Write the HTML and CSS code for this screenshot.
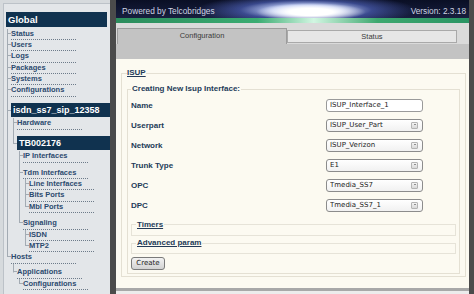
FILE: index.html
```html
<!DOCTYPE html>
<html lang="en">
<head>
    <meta charset="UTF-8">
    <meta name="viewport" content="width=device-width, initial-scale=1.0">
    <title>Toolpack Web Portal</title>
    <link rel="stylesheet" href="styles.css">
</head>
<body>
    <div class="sidebar">
        <div class="node-title global">Global</div>
        <ul class="tree top">
            <li><a href="#">Status</a></li>
            <li><a href="#">Users</a></li>
            <li><a href="#">Logs</a></li>
            <li><a href="#">Packages</a></li>
            <li><a href="#">Systems</a></li>
            <li><a href="#">Configurations</a></li>
            <li class="group">
                <div class="node-title">isdn_ss7_sip_12358</div>
                <ul class="tree first">
                    <li><a href="#">Hardware</a></li>
                    <li class="group">
                        <div class="node-title">TB002176</div>
                        <ul class="tree first">
                            <li><a href="#">IP Interfaces</a></li>
                            <li class="branch"><a href="#">Tdm Interfaces</a>
                                <ul class="tree">
                                    <li><a href="#">Line Interfaces</a></li>
                                    <li><a href="#">Bits Ports</a></li>
                                    <li><a href="#">Mbl Ports</a></li>
                                </ul>
                            </li>
                            <li class="branch"><a href="#">Signaling</a>
                                <ul class="tree">
                                    <li><a href="#">ISDN</a></li>
                                    <li><a href="#">MTP2</a></li>
                                </ul>
                            </li>
                        </ul>
                    </li>
                </ul>
            </li>
            <li><a href="#">Hosts</a>
                <ul class="tree">
                    <li class="apps"><a href="#">Applications</a>
                        <ul class="tree">
                            <li><a href="#">Configurations</a></li>
                        </ul>
                    </li>
                </ul>
            </li>
        </ul>
    </div>

    <div class="main">
        <div class="banner">
            <span>Powered by Telcobridges</span>
            <span>Version: 2.3.18</span>
        </div>
        <div class="tabs">
            <div class="tab active">Configuration</div>
            <div class="tab">Status</div>
        </div>
        <div class="tab-band"></div>

        <div class="content">
            <fieldset class="outer">
                <legend><a href="#">ISUP</a></legend>
                <fieldset class="inner">
                    <legend>Creating New Isup Interface:</legend>
                    <form class="rows" id="isupForm">
                        <label for="name">Name</label>
                        <input type="text" id="name" value="ISUP_Interface_1">

                        <label for="userpart">Userpart</label>
                        <span class="select"><select id="userpart"><option>ISUP_User_Part</option></select><span class="arrow"></span></span>

                        <label for="network">Network</label>
                        <span class="select"><select id="network"><option>ISUP_Verizon</option></select><span class="arrow"></span></span>

                        <label for="trunk">Trunk Type</label>
                        <span class="select"><select id="trunk"><option>E1</option><option>T1</option></select><span class="arrow"></span></span>

                        <label for="opc">OPC</label>
                        <span class="select"><select id="opc"><option>Tmedia_SS7</option></select><span class="arrow"></span></span>

                        <label for="dpc">DPC</label>
                        <span class="select"><select id="dpc"><option>Tmedia_SS7_1</option></select><span class="arrow"></span></span>
                    </form>
                    <fieldset class="folded"><legend><a href="#">Timers</a></legend></fieldset>
                    <fieldset class="folded"><legend><a href="#">Advanced param</a></legend></fieldset>
                    <button type="submit" form="isupForm" class="create">Create</button>
                </fieldset>
            </fieldset>
        </div>
        <div class="footer"></div>
    </div>
</body>
</html>
```

FILE: styles.css
```css
* {
    box-sizing: border-box;
}
body {
    margin: 0;
    height: 100vh;
    overflow: hidden;
    display: flex;
    gap: 6px;
    background: #4b4b4b;
    font-family: 'Liberation Sans', Arial, sans-serif;
}

/* left tree */
.sidebar {
    flex: none;
    width: 110px;
    padding: 12px 0 0 6px;
    background: #e3e6e9;
    box-shadow: inset 3px 3px 0 #d6dadd, inset 4px 4px 0 #bcc2c8;
}
.node-title {
    height: 14px;
    line-height: 14px;
    padding-left: 2px;
    background: #10324f;
    color: #fff;
    font-size: 9px;
    font-weight: bold;
    white-space: nowrap;
    overflow: hidden;
}
.node-title.global {
    height: 15px;
    line-height: 15px;
    margin-right: 3px;
    font-size: 9.5px;
}
.tree {
    list-style: none;
    margin: 0 0 0 2px;
    padding: 0;
}
.tree.top {
    margin-left: 1px;
    padding-top: 1.5px;
}
.tree.first {
    padding-top: 1.5px;
}
.tree li {
    --dash: 4px;
    padding-left: 4px;
    background:
        linear-gradient(#a3abb3, #a3abb3) 0 0 / 1px 100% no-repeat,
        linear-gradient(#a3abb3, #a3abb3) 0 var(--dash) / 4px 1px no-repeat;
}
.tree li:last-child {
    background-size: 1px calc(var(--dash) + 1px), 4px 1px;
}
.tree li.group {
    --dash: 13px;
    padding-top: 6px;
}
.tree li.branch {
    --dash: 9px;
    padding-top: 5px;
}
.tree li.apps {
    --dash: 7.5px;
    padding-top: 3.5px;
}
.tree a {
    display: block;
    width: 65px;
    line-height: 9px;
    padding-bottom: 1.4px;
    border-bottom: 1px dotted #6d7b8a;
    color: #2b4a6e;
    font-size: 7.5px;
    font-weight: bold;
    text-decoration: none;
    white-space: nowrap;
}

/* right side */
.main {
    flex: none;
    width: 353px;
    display: flex;
    flex-direction: column;
}
.banner {
    height: 23px;
    display: flex;
    justify-content: space-between;
    align-items: flex-start;
    padding: 6px 3px 0 6px;
    font-size: 8.3px;
    line-height: 10px;
    color: #cfd4e4;
    border-bottom: 5px solid transparent;
    background:
        linear-gradient(90deg, #2b8c5c 0%, #3aac72 40%, #d2f6e2 56%, #3da86f 74%, #2a9463 100%) bottom / 100% 5px no-repeat,
        radial-gradient(ellipse 55px 9px at 195px 12px, #fff 0%, #fff 40%, rgba(255, 255, 255, 0) 100%),
        radial-gradient(ellipse 110px 16px at 190px 10px, #eef1ff 0%, #b4c2f0 30%, rgba(80, 100, 190, 0.65) 60%, rgba(30, 40, 90, 0) 100%),
        linear-gradient(180deg, #0a0f25, #1b2346);
    background-origin: border-box;
}
.tabs {
    height: 21px;
    display: flex;
    align-items: flex-start;
    padding: 5px 0 0 1px;
    background: #dadada;
}
.tab {
    width: 170px;
    height: 13px;
    margin-top: 2px;
    border: 1px solid #a9a9a9;
    background: #e6e6e6;
    color: #3a3a3a;
    font-size: 7.5px;
    line-height: 11px;
    text-align: center;
}
.tab.active {
    height: 16px;
    margin-top: 0;
    border-color: #9c9c9c;
    border-bottom: none;
    background: #c3c3c3;
    line-height: 14px;
}
.tab-band {
    height: 15px;
    background: #c3c3c3;
}
.content {
    height: 229px;
    padding: 9px 3px 0 5px;
    background: #fcfaf1;
}
.footer {
    flex: 1;
    border-top: 3px solid #a8a8a8;
    background: #ececec;
}

/* form */
fieldset {
    margin: 0;
    border: 1px solid #e4e0d3;
}
legend {
    padding: 0 1px;
    line-height: 10px;
    color: #233a58;
    font-size: 8px;
    font-weight: bold;
}
legend a {
    color: #233a58;
}
.outer {
    padding: 6px 5px 2px 5px;
}
.outer > legend {
    padding: 0;
}
.inner {
    padding: 1px 3px 3px 3px;
}
.rows {
    display: grid;
    grid-template-columns: 195px 97px;
    grid-auto-rows: 20px;
    align-items: center;
    margin: 0;
}
.rows label {
    color: #233a58;
    font-size: 8px;
    font-weight: bold;
}
.rows input,
.select select {
    display: block;
    width: 97px;
    height: 13px;
    margin: 0;
    padding: 0 3px;
    border: 1px solid #9a9a9a;
    border-radius: 3px;
    background: #fff;
    color: #222;
    font-family: 'DejaVu Sans', sans-serif;
    font-size: 7px;
    outline: none;
}
.select {
    position: relative;
    display: block;
    height: 13px;
}
.select select {
    appearance: none;
    -webkit-appearance: none;
    border-color: #8c8c8c;
    background: linear-gradient(#ffffff, #f1f1f1);
}
.arrow {
    position: absolute;
    top: 3px;
    right: 5px;
    width: 7px;
    height: 7px;
    border: 1px solid #b4b4b4;
    border-radius: 1px;
    background: linear-gradient(#f4f4f4, #d8d8d8);
}
.arrow::after {
    content: '';
    position: absolute;
    left: 1.5px;
    top: 1.5px;
    border: 1px solid transparent;
    border-top: 1.5px solid #333;
}
.folded {
    height: 16px;
    margin-top: 4.5px;
    padding: 0 4px 5px 4px;
    border-color: #e6e3d8;
}
.folded + .folded {
    margin-top: 2.5px;
}
.create {
    display: block;
    width: 34px;
    height: 13px;
    margin-top: 2.5px;
    padding: 0;
    border: 1px solid #7a7a7a;
    border-radius: 3px;
    background: linear-gradient(#f2f2f2, #d2d2d2);
    color: #222;
    font-family: 'DejaVu Sans', sans-serif;
    font-size: 7px;
    cursor: pointer;
}
```
